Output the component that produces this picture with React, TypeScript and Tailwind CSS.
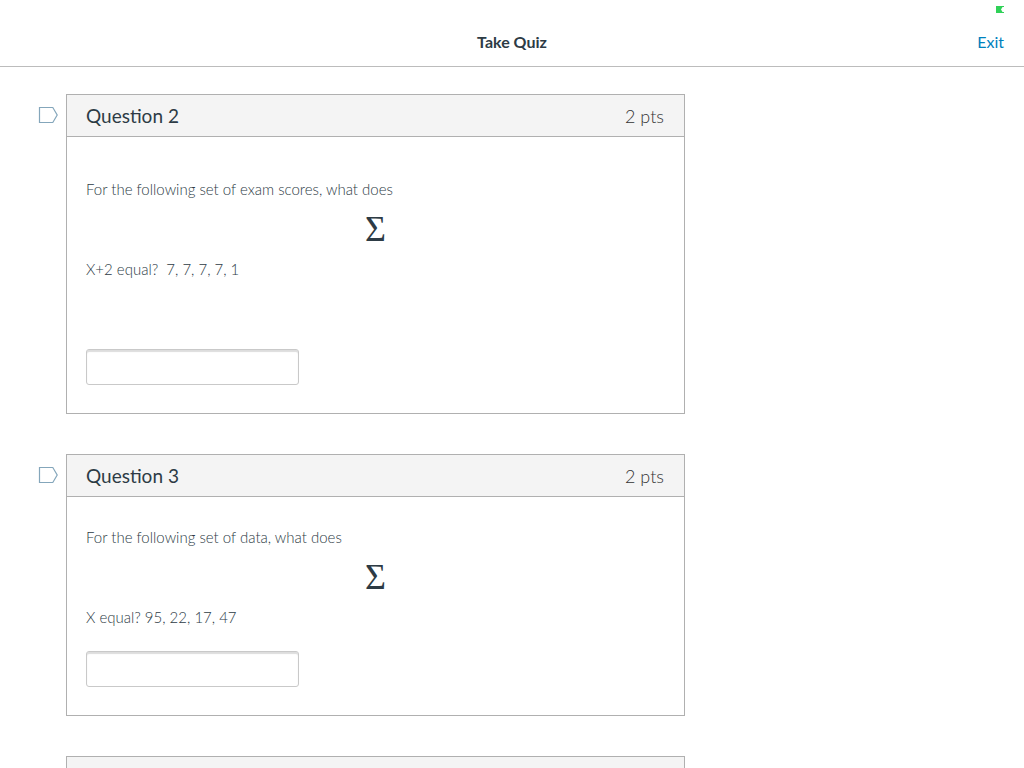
import React from "react";

type Question = {
  number: number;
  points: number;
  before: string;
  after: string;
  spaced?: boolean;
};

const questions: Question[] = [
  {
    number: 2,
    points: 2,
    before: "For the following set of exam scores, what does",
    after: "X+2 equal?\u00a0 7, 7, 7, 7, 1",
    spaced: true,
  },
  {
    number: 3,
    points: 2,
    before: "For the following set of data, what does",
    after: "X equal? 95, 22, 17, 47",
  },
];

function FlagButton({ label }: { label: string }) {
  return (
    <button type="button" aria-label={label} className="mt-3 h-5 w-5 shrink-0">
      <svg viewBox="0 0 20 20" className="h-5 w-5" fill="none">
        <path
          d="M1.5 1.5H14.8L19.2 9L14.8 16.5H1.5Z"
          stroke="#84a6bb"
          strokeWidth="1.2"
        />
      </svg>
    </button>
  );
}

function QuestionCard({ question }: { question: Question }) {
  const { number, points, before, after, spaced } = question;
  const inputId = `answer-${number}`;

  return (
    <div className="flex gap-2">
      <FlagButton label={`Flag question ${number}`} />
      <section className="flex-1 border border-[#b0b0b0] bg-white">
        <header className="flex h-[42px] items-center justify-between border-b border-[#b0b0b0] bg-[#f4f4f4] pr-5 pl-[19px]">
          <h2 className="text-[19px] leading-6 text-[#2d3b45]">
            Question {number}
          </h2>
          <span className="text-lg font-light text-[#333333]">
            {points} pts
          </span>
        </header>
        <div
          className={`px-[19px] pb-7 text-[15px] leading-6 font-light text-[#2d3b45] ${
            spaced ? "pt-10" : "pt-7"
          }`}
        >
          <label htmlFor={inputId} className="block">
            <span className="block">{before}</span>
            <span className="block pt-2 pb-2 text-center font-['Liberation_Serif',serif] text-4xl leading-10 font-normal">
              Σ
            </span>
            <span className="block">{after}</span>
          </label>
          <input
            id={inputId}
            type="text"
            className={`block h-9 w-[213px] rounded-[3px] border border-[#c9c9c9] px-2 shadow-[inset_0_2px_1px_#dddddd] ${
              spaced ? "mt-[68px]" : "mt-[22px]"
            }`}
          />
        </div>
      </section>
    </div>
  );
}

export default function App() {
  return (
    <div className="h-screen overflow-hidden bg-white font-[Lato,sans-serif]">
      <div className="flex h-[19px] items-center justify-end pr-5">
        <svg viewBox="0 0 8 7" className="h-[7px] w-2" fill="#30d158">
          <path d="M0 0H8V1H6.5L5 3.5L6.5 6H8V7H0Z" />
        </svg>
      </div>
      <nav className="grid h-12 grid-cols-3 items-center border-b border-[#bcbcbc] px-5 pb-px">
        <h1 className="col-start-2 text-center text-base font-bold text-[#2d3b45]">
          Take Quiz
        </h1>
        <a href="#exit" className="text-right text-base text-[#0081bd]">
          Exit
        </a>
      </nav>
      <main className="flex max-w-[685px] flex-col gap-10 pt-[27px] pl-[38px]">
        {questions.map((question) => (
          <QuestionCard key={question.number} question={question} />
        ))}
        <div className="ml-7 h-[43px] border border-[#b0b0b0] bg-[#f4f4f4]" />
      </main>
    </div>
  );
}
